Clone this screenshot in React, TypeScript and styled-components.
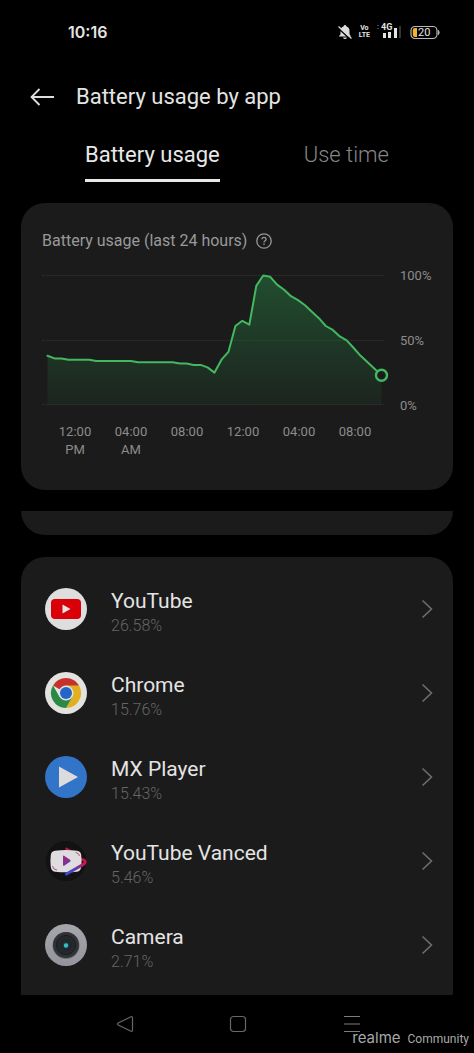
import React, { useState } from "react";
import styled, { createGlobalStyle } from "styled-components";

const Global = createGlobalStyle`
  *, *::before, *::after { box-sizing: border-box; }
  html, body { margin: 0; background: #000; }
  body { font-family: Roboto, Inter, "Liberation Sans", sans-serif; color: #e4e4e4; }
  button { font: inherit; color: inherit; background: none; border: 0; padding: 0; cursor: pointer; }
  h1, h2, p, ul { margin: 0; padding: 0; font-weight: 400; }
  svg { display: block; }
`;

const Screen = styled.div`
  display: flex;
  flex-direction: column;
  min-height: 100vh;
  background: #000;
`;

const StatusBar = styled.header`
  display: flex;
  align-items: center;
  justify-content: space-between;
  height: 64px;
  padding: 0 34px 0 68px;
`;

const Clock = styled.time`
  font-family: Inter, sans-serif;
  font-size: 16px;
  line-height: 20px;
  font-weight: 600;
`;

const StatusIcons = styled.div`
  display: flex;
  align-items: center;
  gap: 7px;
`;

const Volte = styled.span`
  font-size: 7px;
  line-height: 7px;
  font-weight: 700;
  text-align: center;
`;

const Signal = styled.span`
  position: relative;
  width: 26px;
  height: 18px;
`;

const SignalLabel = styled.span`
  position: absolute;
  top: 0;
  left: 4px;
  font-size: 9px;
  line-height: 9px;
  font-weight: 700;
`;

const Battery = styled.span`
  position: relative;
  width: 30px;
  height: 15px;
`;

const BatteryLevel = styled.span`
  position: absolute;
  top: 0;
  left: 8px;
  font-size: 11px;
  line-height: 15px;
`;

const TitleBar = styled.div`
  display: flex;
  align-items: center;
  gap: 22px;
  height: 66px;
  padding: 0 30px;
`;

const Title = styled.h1`
  font-size: 22px;
  line-height: 28px;
`;

const Tabs = styled.div`
  display: flex;
  justify-content: space-between;
  height: 73px;
  padding: 8px 85px 0;
`;

const Tab = styled.button<{ $active: boolean }>`
  && {
    height: 44px;
    padding-bottom: 8px;
    font-size: 22px;
    line-height: 30px;
    font-weight: ${(p) => (p.$active ? 400 : 300)};
    color: ${(p) => (p.$active ? "#e8e8e8" : "#868686")};
    border-bottom: 3px solid ${(p) => (p.$active ? "#e8e8e8" : "transparent")};
  }
`;

const Card = styled.section`
  margin: 0 21px;
  background: #1b1b1b;
  border-radius: 24px;
`;

const ChartCard = styled(Card)`
  height: 287px;
  padding: 26px 21px 0;
`;

const CardHeading = styled.div`
  display: flex;
  align-items: center;
  gap: 9px;
  height: 24px;
  color: #999;
`;

const CardTitle = styled.h2`
  font-size: 16px;
  line-height: 24px;
`;

const Plot = styled.div`
  display: flex;
  gap: 16px;
  margin-top: 13px;
`;

const PlotArea = styled.div`
  flex: 1;
  min-width: 0;
`;

const Scale = styled.div`
  display: flex;
  flex-direction: column;
  justify-content: space-between;
  width: 32px;
  height: 150px;
  font-size: 13px;
  line-height: 20px;
  color: #8c8c8c;
  white-space: nowrap;
`;

const Hours = styled.div`
  display: grid;
  grid-template-columns: repeat(6, 1fr);
  padding: 12px 1px 0 5px;
  font-size: 13px;
  line-height: 18px;
  text-align: center;
  color: #8c8c8c;
`;

const ScrolledCard = styled(Card)`
  height: 24px;
  margin-top: 21px;
  border-radius: 0 0 24px 24px;
`;

const ListCard = styled(Card)`
  flex: 1;
  margin-top: 22px;
  padding: 10px 0 8px;
  border-radius: 24px 24px 0 0;
`;

const AppList = styled.ul`
  list-style: none;
`;

const AppRow = styled.button`
  && {
    display: flex;
    align-items: center;
    gap: 24px;
    width: 100%;
    height: 84px;
    padding: 0 20px 0 24px;
    text-align: left;
  }
`;

const AppText = styled.span`
  display: flex;
  flex: 1;
  flex-direction: column;
  padding-top: 5px;
`;

const AppName = styled.span`
  font-size: 21px;
  line-height: 28px;
`;

const Share = styled.span`
  font-size: 16px;
  line-height: 22px;
  font-weight: 300;
  color: #666;
`;

const NavBar = styled.nav`
  position: relative;
  display: grid;
  grid-template-columns: repeat(3, 1fr);
  height: 58px;
  padding: 0 65px 0 68px;
`;

const NavButton = styled.button`
  display: grid;
  place-items: center;
`;

const Watermark = styled.p`
  position: absolute;
  right: 5px;
  bottom: 4px;
  display: flex;
  align-items: baseline;
  gap: 7px;
  font-size: 12px;
  line-height: 20px;
  color: #a8a8a8;
`;

const Brand = styled.span`
  font-family: Inter, sans-serif;
  font-size: 15px;
`;

const LEVELS = [
  38, 36, 36, 35, 35, 35, 35, 34, 34, 34, 34, 34, 34, 33, 33, 33, 33, 33, 33, 32,
  32, 31, 31, 29, 25, 35, 41, 61, 65, 62, 92, 100, 99, 93, 89, 84, 81, 77, 72,
  67, 61, 58, 53, 50, 44, 38, 33, 28, 23,
];

const HOURS = ["12:00 PM", "04:00 AM", "08:00", "12:00", "04:00", "08:00"];

function UsageChart() {
  const left = 5.5;
  const step = 334 / (LEVELS.length - 1);
  const y = (v: number) => 139 - v * 1.295;
  const points = LEVELS.map((v, i) => `${(left + i * step).toFixed(1)},${y(v).toFixed(1)}`);
  const last = LEVELS[LEVELS.length - 1];
  return (
    <svg viewBox="0 0 342 145" width="100%" overflow="visible" role="img" aria-label="Battery level over the last 24 hours">
      <defs>
        <linearGradient id="fill" x1="0" y1="9" x2="0" y2="139" gradientUnits="userSpaceOnUse">
          <stop offset="0" stopColor="#2a9a4c" stopOpacity="0.4" />
          <stop offset="1" stopColor="#2a9a4c" stopOpacity="0.07" />
        </linearGradient>
      </defs>
      {[9.5, 74.5, 138.5].map((gy) => (
        <line key={gy} x1="0" x2="342" y1={gy} y2={gy} stroke="#2b2b2b" strokeDasharray="3 1" />
      ))}
      <polygon points={`${left},139 ${points.join(" ")} ${left + 334},139`} fill="url(#fill)" />
      <polyline points={points.join(" ")} fill="none" stroke="#42b860" strokeWidth="2" strokeLinejoin="round" strokeLinecap="round" />
      <circle cx={left + 334} cy={y(last)} r="5.5" fill="#1b1b1b" stroke="#42b860" strokeWidth="2.4" />
    </svg>
  );
}

function YouTubeIcon() {
  return (
    <svg width="42" height="42" viewBox="0 0 42 42" aria-hidden="true">
      <circle cx="21" cy="21" r="21" fill="#dedede" />
      <rect x="6" y="11" width="30" height="20" rx="4" fill="#d90007" />
      <path d="M17.5 16.5 25.5 21l-8 4.5z" fill="#e4e4e4" />
    </svg>
  );
}

function ChromeIcon() {
  return (
    <svg width="42" height="42" viewBox="0 0 42 42" aria-hidden="true">
      <circle cx="21" cy="21" r="21" fill="#e2e2df" />
      <path d="M21 21 8 13.5A15 15 0 0 1 34 13.5z" fill="#c5322b" />
      <path d="M34 13.5A15 15 0 0 1 21 36L27.5 24.7 21 13.5z" fill="#e0b020" />
      <path d="M8 13.5A15 15 0 0 0 21 36L27.5 24.7 14.5 24.7z" fill="#2a8a45" />
      <circle cx="21" cy="21" r="7.5" fill="#e2e2df" />
      <circle cx="21" cy="21" r="6" fill="#2364c8" />
    </svg>
  );
}

function PlayerIcon() {
  return (
    <svg width="42" height="42" viewBox="0 0 42 42" aria-hidden="true">
      <circle cx="21" cy="21" r="21" fill="#3274c8" />
      <path d="M14 10.5 33 21 14 31.5z" fill="#dcdcdc" />
    </svg>
  );
}

function VancedIcon() {
  return (
    <svg width="42" height="42" viewBox="0 0 42 42" aria-hidden="true">
      <defs>
        <linearGradient id="swoosh" x1="20" y1="34" x2="40" y2="20" gradientUnits="userSpaceOnUse">
          <stop offset="0" stopColor="#2f50d8" />
          <stop offset="0.45" stopColor="#5a3fae" />
          <stop offset="1" stopColor="#d5124a" />
        </linearGradient>
        <linearGradient id="play" x1="18" y1="15" x2="25" y2="27" gradientUnits="userSpaceOnUse">
          <stop offset="0" stopColor="#b0287c" />
          <stop offset="1" stopColor="#5a3aa6" />
        </linearGradient>
      </defs>
      <circle cx="21" cy="21" r="20" fill="#121212" />
      <path d="M20.500 10.500V8.500Q20.500 7.200 22 7.800L27 10.500z" fill="#b8184a" />
      <path d="M36 19Q42 20.500 39.500 23.500L36 26" fill="none" stroke="#d5124a" strokeWidth="2.800" />
      <path d="M10 10.800Q21 9.300 32 10.800Q35.800 11.300 36.200 15Q37 21 36.200 27Q35.800 31.200 32 31.700Q21 33 10 31.700Q6.300 31.200 5.800 27Q5 21 5.800 15Q6.300 11.300 10 10.800z" fill="#dfdce0" />
      <path d="M21.500 34 38 24.500" stroke="url(#swoosh)" strokeWidth="3" strokeLinecap="round" />
      <path d="M18 16.500Q18 15 19.500 16l5.500 3.800q1.400 1 0 2L19.500 25.500Q18 26.300 18 25z" fill="url(#play)" />
      <path d="M30.500 12.500q3.500.3 4 3.500M7.500 26q.5 3.800 4.500 4" fill="none" stroke="#a84472" strokeWidth="0.9" />
    </svg>
  );
}

function CameraIcon() {
  return (
    <svg width="42" height="42" viewBox="0 0 42 42" aria-hidden="true">
      <defs>
        <linearGradient id="body" x1="0" y1="0" x2="0" y2="1">
          <stop offset="0" stopColor="#a6a7ad" />
          <stop offset="1" stopColor="#94959c" />
        </linearGradient>
        <radialGradient id="lens">
          <stop offset="0" stopColor="#1c4448" />
          <stop offset="0.5" stopColor="#202427" />
          <stop offset="1" stopColor="#2b2d30" />
        </radialGradient>
      </defs>
      <circle cx="21" cy="21" r="21" fill="url(#body)" />
      <circle cx="21" cy="21.500" r="13.500" fill="#6b6d73" />
      <circle cx="21" cy="21" r="13" fill="#303235" />
      <circle cx="21" cy="21" r="9.500" fill="url(#lens)" stroke="#17191b" />
      <circle cx="21" cy="21.500" r="2.200" fill="#35bcc4" />
    </svg>
  );
}

const APPS = [
  { name: "YouTube", share: "26.58%", Icon: YouTubeIcon },
  { name: "Chrome", share: "15.76%", Icon: ChromeIcon },
  { name: "MX Player", share: "15.43%", Icon: PlayerIcon },
  { name: "YouTube Vanced", share: "5.46%", Icon: VancedIcon },
  { name: "Camera", share: "2.71%", Icon: CameraIcon },
];

const TABS = ["Battery usage", "Use time"];

export default function App() {
  const [tab, setTab] = useState(TABS[0]);
  return (
    <Screen>
      <Global />
      <StatusBar>
        <Clock>10:16</Clock>
        <StatusIcons>
          <svg width="14" height="16" viewBox="0 0 14 16" aria-label="Muted" role="img">
            <path d="M7 1q1.200 0 1.300 1.200Q11.500 3.200 11.500 7v3.200L13.200 12.500H.8L2.500 10.200V7Q2.500 3.200 5.700 2.200 5.800 1 7 1zM5 13.500h4Q8.600 15 7 15T5 13.500z" fill="#dcdcdc" />
            <path d="M0 4 12 15" stroke="#000" strokeWidth="1.400" />
            <path d="M.5 2.500 13.500 14.500" stroke="#dcdcdc" strokeWidth="1.200" />
          </svg>
          <Volte>Vo<br />LTE</Volte>
          <Signal>
            <SignalLabel>4G</SignalLabel>
            <svg width="26" height="18" viewBox="0 0 26 18" aria-hidden="true">
              <path d="M6 10h3v5H6zM11 9h3v6h-3zM17 5h3v10h-3z" fill="#e4e4e4" />
              <path d="M22 3h2v12h-2z" fill="#333" />
              <path d="M0 2h2v1H0zM0 5h2v1H0z" fill="#444" />
            </svg>
          </Signal>
          <Battery>
            <svg width="30" height="15" viewBox="0 0 30 15" aria-hidden="true">
              <rect x="1" y="1.500" width="26" height="12" rx="4" fill="none" stroke="#b8b8b8" strokeWidth="1.200" />
              <path d="M28.500 5.500q1.200 2 0 4z" fill="#b8b8b8" stroke="#b8b8b8" />
              <path d="M5 3h2v9H5q-2.200 0-2.200-2.200V5.200Q2.800 3 5 3z" fill="#f5b32c" />
            </svg>
            <BatteryLevel>20</BatteryLevel>
          </Battery>
        </StatusIcons>
      </StatusBar>

      <TitleBar>
        <button aria-label="Back">
          <svg width="24" height="20" viewBox="0 0 24 20" fill="none" stroke="#dedede" strokeWidth="1.800">
            <path d="M24 10H1.500M9.500 2l-8 8 8 8" />
          </svg>
        </button>
        <Title>Battery usage by app</Title>
      </TitleBar>

      <Tabs role="tablist">
        {TABS.map((t) => (
          <Tab key={t} role="tab" aria-selected={t === tab} $active={t === tab} onClick={() => setTab(t)}>
            {t}
          </Tab>
        ))}
      </Tabs>

      <ChartCard>
        <CardHeading>
          <CardTitle>Battery usage (last 24 hours)</CardTitle>
          <button aria-label="Help">
            <svg width="16" height="16" viewBox="0 0 16 16" fill="none" stroke="#999" strokeWidth="1.300">
              <circle cx="8" cy="8" r="7.200" />
              <path d="M5.900 6.300Q6 4.300 8 4.300t2.100 1.800Q10.100 7.300 8.900 8 8 8.500 8 9.500M8 10.600V12" />
            </svg>
          </button>
        </CardHeading>
        <Plot>
          <PlotArea>
            <UsageChart />
            <Hours>
              {HOURS.map((h, i) => (
                <span key={i}>
                  {h.split(" ").map((part) => (
                    <div key={part}>{part}</div>
                  ))}
                </span>
              ))}
            </Hours>
          </PlotArea>
          <Scale>
            <span>100%</span>
            <span>50%</span>
            <span>0%</span>
          </Scale>
        </Plot>
      </ChartCard>

      <ScrolledCard aria-hidden="true" />

      <ListCard>
        <AppList>
          {APPS.map(({ name, share, Icon }) => (
            <li key={name}>
              <AppRow>
                <Icon />
                <AppText>
                  <AppName>{name}</AppName>
                  <Share>{share}</Share>
                </AppText>
                <svg width="12" height="20" viewBox="0 0 12 20" fill="none" stroke="#6e6e6e" strokeWidth="1.600" aria-hidden="true">
                  <path d="m1.500 1.500 9 8.500-9 8.500" />
                </svg>
              </AppRow>
            </li>
          ))}
        </AppList>
      </ListCard>

      <NavBar>
        <NavButton aria-label="Back">
          <svg width="18" height="18" viewBox="0 0 18 18" fill="none" stroke="#686868" strokeWidth="1.200">
            <path d="M14.500 2Q16.500 1 16.500 3v12q0 2-2 1L2.200 10Q.8 9 2.200 8z" />
          </svg>
        </NavButton>
        <NavButton aria-label="Home">
          <svg width="18" height="18" viewBox="0 0 18 18" fill="none" stroke="#686868" strokeWidth="1.200">
            <rect x="1.500" y="1.500" width="15" height="15" rx="3" />
          </svg>
        </NavButton>
        <NavButton aria-label="Recent apps">
          <svg width="18" height="18" viewBox="0 0 18 18" fill="none" stroke="#7c7c7c" strokeWidth="1.200">
            <path d="M1 1.500h16M1 9h16M1 16.500h16" />
          </svg>
        </NavButton>
        <Watermark>
          <Brand>realme</Brand>
          <span>Community</span>
        </Watermark>
      </NavBar>
    </Screen>
  );
}
